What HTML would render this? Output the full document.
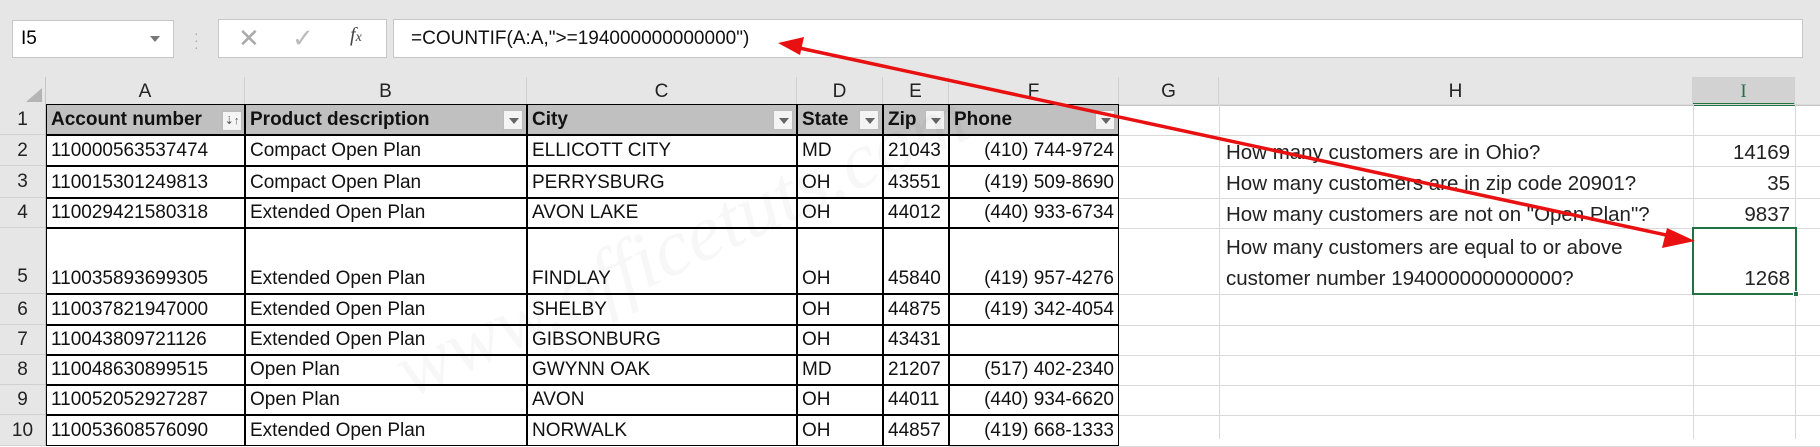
<!DOCTYPE html>
<html><head><meta charset="utf-8"><style>
*{margin:0;padding:0;box-sizing:border-box}
body{width:1820px;height:439px;overflow:hidden;background:#fff;position:relative;font-family:"Liberation Sans",Arial,sans-serif}
.a{position:absolute}
.tb{left:0;top:0;width:1820px;height:77px;background:#e6e6e6}
.box{background:#fff;border:1px solid #c6c6c6}
.ch{top:77px;height:29px;background:#e6e6e6;border-right:1px solid #d0d0d0;border-bottom:1px solid #c6c6c6;text-align:center;font-size:19px;line-height:29px;color:#222}
.rh{left:0;width:46px;background:#e6e6e6;border-bottom:1px solid #d0d0d0;border-right:1px solid #c6c6c6;text-align:center;font-size:19px;color:#222}
.c{font-size:19px;color:#111;white-space:nowrap;overflow:hidden;padding:0 4px;display:flex;align-items:flex-end;padding-bottom:3px}
.hd{font-weight:bold;background:#c0c0c0;font-size:19px}
.dd{position:absolute;right:3px;top:5px;width:20px;height:20px;background:#f4f4f4;border:1px solid #bbb}
.dd:after{content:"";position:absolute;left:5px;top:7px;border-left:5px solid transparent;border-right:5px solid transparent;border-top:6px solid #666}
.gl{background:#d9d9d9}
.q{font-size:20.5px;color:#222;transform-origin:left;}
</style></head><body>
<div class="a tb"></div>
<div class="a box" style="left:12px;top:20px;width:162px;height:38px;font-size:19px;padding:7px 8px">I5</div>
<div class="a" style="left:150px;top:36px;border-left:5px solid transparent;border-right:5px solid transparent;border-top:6px solid #777"></div>
<div class="a" style="left:194px;top:30px;color:#aaa;font-size:14px;line-height:7px">·<br>·<br>·</div>
<div class="a box" style="left:218px;top:19px;width:169px;height:39px"></div>
<div class="a" style="left:238px;top:23px;font-size:26px;color:#aaa">✕</div>
<div class="a" style="left:292px;top:23px;font-size:26px;color:#bbb">✓</div>
<div class="a" style="left:350px;top:24px;font-size:20px;font-style:italic;font-family:'Liberation Serif',serif;color:#444">f<span style="font-size:14px">x</span></div>
<div class="a box" style="left:393px;top:19px;width:1410px;height:39px;font-size:19px;padding:8px 17px;color:#111">=COUNTIF(A:A,"&gt;=194000000000000")</div>

<div class="a" style="left:0;top:77px;width:46px;height:29px;background:#e6e6e6;border-right:1px solid #c6c6c6;border-bottom:1px solid #c6c6c6"></div>
<div class="a" style="left:26px;top:88px;border-left:16px solid transparent;border-bottom:14px solid #b4b4b4"></div>
<div class="a ch" style="left:46px;width:199px">A</div>
<div class="a ch" style="left:245px;width:282px">B</div>
<div class="a ch" style="left:527px;width:270px">C</div>
<div class="a ch" style="left:797px;width:86px">D</div>
<div class="a ch" style="left:883px;width:66px">E</div>
<div class="a ch" style="left:949px;width:170px">F</div>
<div class="a ch" style="left:1119px;width:100px">G</div>
<div class="a ch" style="left:1219px;width:474px">H</div>
<div class="a ch" style="left:1693px;width:102px;background:#d2d2d2;border-bottom:3px solid #217346;color:#217346;font-family:'Liberation Serif',serif">I</div>
<div class="a ch" style="left:1795px;width:25px;border-right:none"></div>

<div id="grid"></div>
<script>
var rows=[[104,135],[135,166],[166,198],[198,228],[228,294],[294,325],[325,355],[355,385],[385,415],[415,446]];
var cols=[46,245,527,797,883,949,1119,1219,1693,1795];
var data=[
["1","Account number","Product description","City","State","Zip","Phone"],
["2","110000563537474","Compact Open Plan","ELLICOTT CITY","MD","21043","(410) 744-9724"],
["3","110015301249813","Compact Open Plan","PERRYSBURG","OH","43551","(419) 509-8690"],
["4","110029421580318","Extended Open Plan","AVON LAKE","OH","44012","(440) 933-6734"],
["5","110035893699305","Extended Open Plan","FINDLAY","OH","45840","(419) 957-4276"],
["6","110037821947000","Extended Open Plan","SHELBY","OH","44875","(419) 342-4054"],
["7","110043809721126","Extended Open Plan","GIBSONBURG","OH","43431",""],
["8","110048630899515","Open Plan","GWYNN OAK","MD","21207","(517) 402-2340"],
["9","110052052927287","Open Plan","AVON","OH","44011","(440) 934-6620"],
["10","110053608576090","Extended Open Plan","NORWALK","OH","44857","(419) 668-1333"]];
var h='';
for(var i=0;i<rows.length;i++){h+='<div class="a gl" style="left:949px;top:'+(rows[i][1])+'px;width:871px;height:1px"></div>';}
h+='<div class="a gl" style="left:1119px;top:104px;width:701px;height:1px"></div>';
[1219,1693,1795].forEach(function(x){h+='<div class="a gl" style="left:'+x+'px;top:104px;width:1px;height:335px"></div>';});
for(var i=0;i<rows.length;i++){
 var t=rows[i][0],b=rows[i][1],hh=b-t;
 h+='<div class="a rh" style="top:'+t+'px;height:'+hh+'px;line-height:'+(i==4?(hh*2-34):hh)+'px">'+data[i][0]+'</div>';
 for(var j=1;j<7;j++){
  var l=cols[j-1],w=cols[j]-l;
  var cls='a c'+(i==0?' hd':'');
  var st='left:'+l+'px;top:'+t+'px;width:'+w+'px;height:'+hh+'px;border:1.5px solid #000;';
  if(j==6&&i>0)st+='justify-content:flex-end;';
  var txt=data[i][j];
  if(i==0){txt+= '<span class="dd"></span>';st+='position:absolute;';}
  h+='<div class="'+cls+'" style="'+st+'">'+txt+'</div>';
 }
}
document.getElementById('grid').innerHTML=h;
</script>
<div class="a" style="left:222px;top:111px;width:20px;height:20px;background:#f4f4f4;border:1px solid #bbb;font-size:11px;line-height:18px;text-align:center;color:#555">⇣↑</div>

<div class="a q" style="left:1226px;top:141px">How many customers are in Ohio?</div>
<div class="a q" style="left:1226px;top:172px">How many customers are in zip code 20901?</div>
<div class="a q" style="left:1226px;top:203px">How many customers are not on "Open Plan"?</div>
<div class="a q" style="left:1226px;top:236px">How many customers are equal to or above</div>
<div class="a q" style="left:1226px;top:267px">customer number 194000000000000?</div>
<div class="a q" style="left:1693px;top:141px;width:97px;text-align:right">14169</div>
<div class="a q" style="left:1693px;top:172px;width:97px;text-align:right">35</div>
<div class="a q" style="left:1693px;top:203px;width:97px;text-align:right">9837</div>
<div class="a q" style="left:1693px;top:267px;width:97px;text-align:right">1268</div>
<div class="a" style="left:1692px;top:227px;width:105px;height:68px;border:2px solid #217346"></div>
<div class="a" style="left:1793px;top:291px;width:6px;height:6px;background:#217346;border:1px solid #fff"></div>

<div class="a" style="left:400px;top:330px;font-size:80px;font-style:italic;color:rgba(0,0,0,0.03);transform:rotate(-25deg);transform-origin:left;font-family:'Liberation Serif',serif">www.officetuts.com</div>

<svg class="a" style="left:0;top:0" width="1820" height="439">
<g stroke="#e81010" stroke-width="3.5" fill="#e81010">
<line x1="790" y1="46" x2="1680" y2="238"/>
<polygon points="778,43 804,37 800,55" stroke="none"/>
<polygon points="1695,241 1667,228 1662,248" stroke="none"/>
</g>
</svg>
</body></html>
